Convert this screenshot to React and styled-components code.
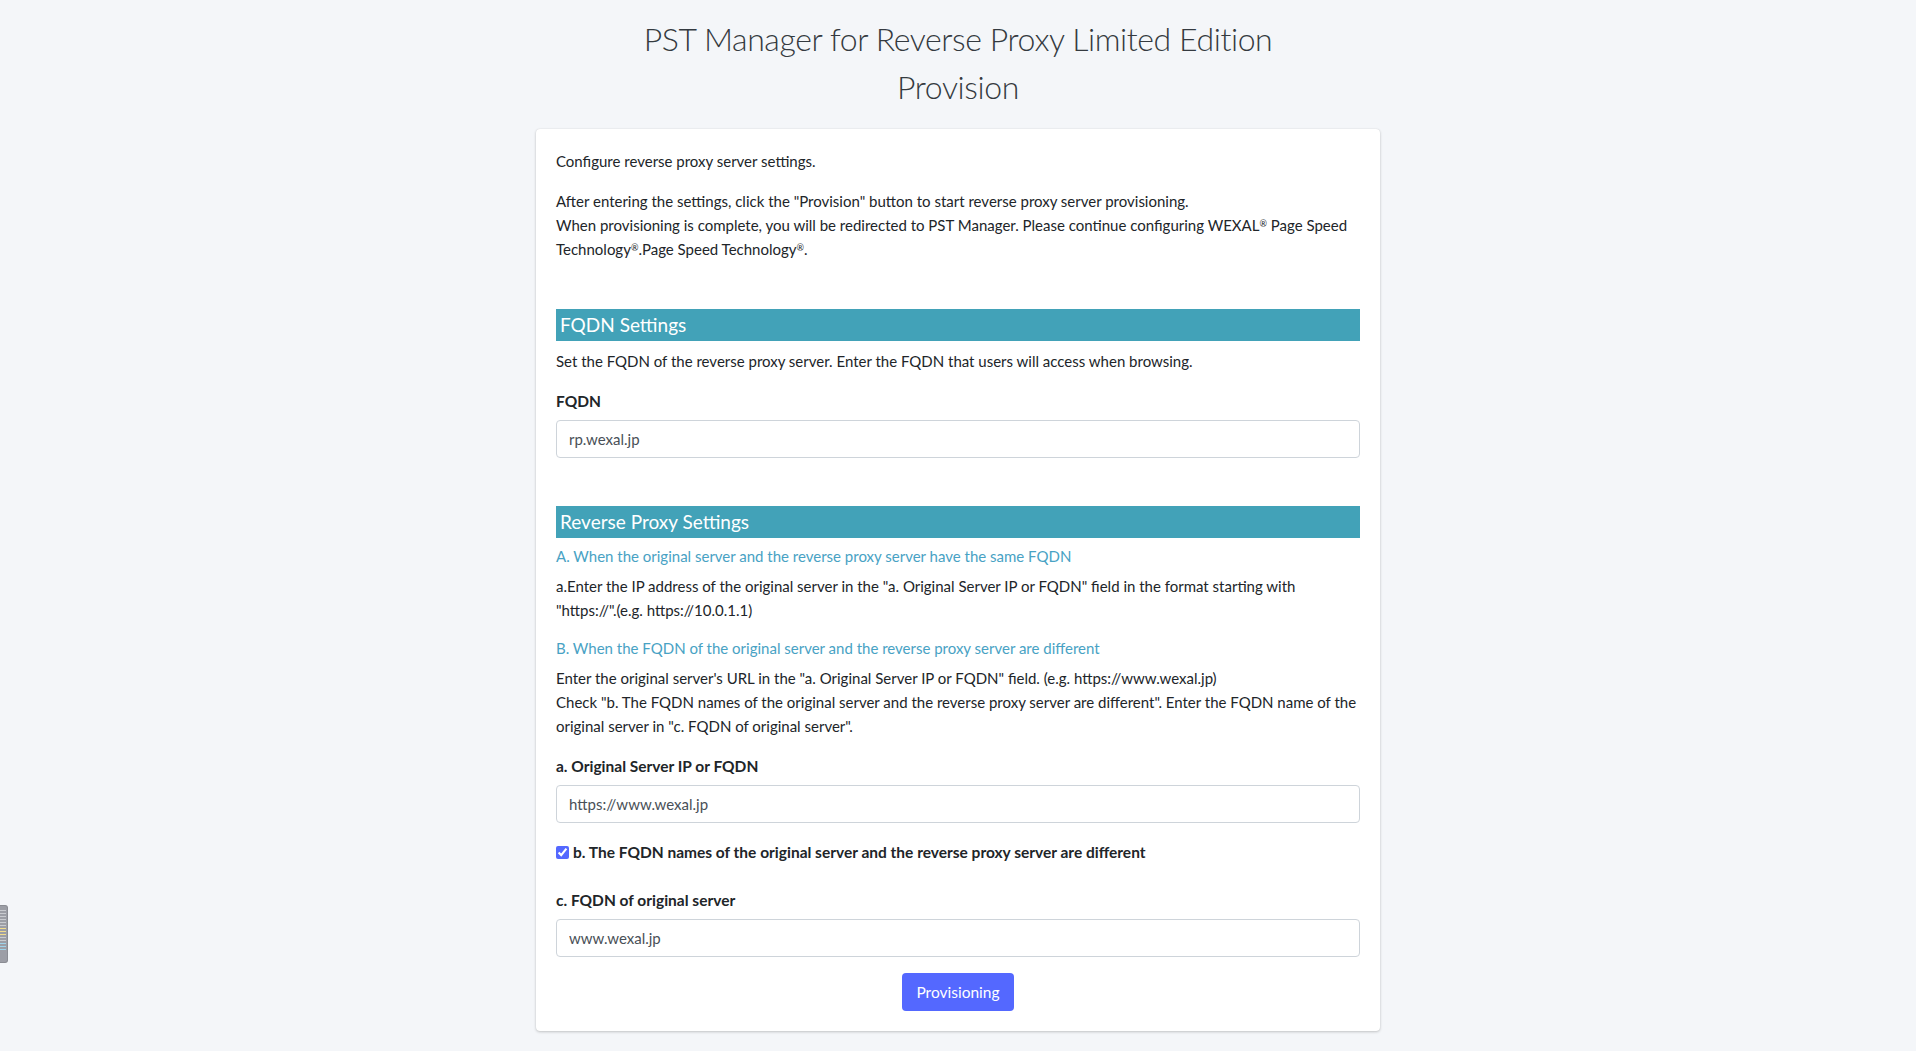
import React from "react";
import styled, { createGlobalStyle } from "styled-components";

const GlobalStyle = createGlobalStyle`
  html, body {
    margin: 0;
    padding: 0;
    background: #f4f6f9;
  }
  body {
    font-family: Lato, "Liberation Sans", sans-serif;
    color: #212529;
  }
  * {
    box-sizing: border-box;
  }
`;

const Page = styled.div`
  min-height: 1051px;
  padding-top: 15px;
  padding-bottom: 19px;
`;

const Title = styled.h1`
  margin: 0 0 18px;
  text-align: center;
  font-size: 32px;
  font-weight: 300;
  line-height: 48px;
  letter-spacing: -0.4px;
  color: #343a40;
`;

const Card = styled.div`
  width: 844px;
  margin: 0 auto;
  padding: 20px;
  background: #fff;
  border-radius: 4px;
  box-shadow: 0 0 1px rgba(0, 0, 0, 0.125), 0 1px 3px rgba(0, 0, 0, 0.2);
  font-size: 15px;
  line-height: 24px;
`;

const Text = styled.p`
  margin: 0 0 ${(p) => (p.$last ? 0 : 16)}px;
`;

const Reg = styled.sup`
  font-size: 0.6em;
  line-height: 0;
  vertical-align: 0.5em;
`;

const NoBreak = styled.span`
  white-space: nowrap;
`;

const Section = styled.section`
  margin-top: 48px;
`;

const SectionBar = styled.h4`
  margin: 0 0 8px;
  height: 32px;
  padding: 0 4px;
  background: #42a2b8;
  color: #fff;
  font-size: 19px;
  font-weight: 400;
  line-height: 32px;
`;

const SubHeading = styled.h5`
  margin: 0 0 8px;
  font-size: 15px;
  font-weight: 400;
  line-height: 20px;
  color: #48a2c4;
`;

const FormGroup = styled.div`
  margin-bottom: ${(p) => p.$mb ?? 16}px;
`;

const Label = styled.label`
  display: block;
  margin-bottom: 7px;
  font-size: 15.5px;
  font-weight: 700;
`;

const Input = styled.input`
  display: block;
  width: 100%;
  height: 38px;
  padding: 0 12px;
  border: 1px solid #ced4da;
  border-radius: 4px;
  background: #fff;
  color: #495057;
  font-family: inherit;
  font-size: 15px;
  outline: none;
`;

const CheckRow = styled.label`
  display: flex;
  align-items: center;
  gap: 4px;
  margin: 17px 0 24px;
  font-size: 15.5px;
  font-weight: 700;
  line-height: 24px;
`;

const Check = styled.input`
  width: 13px;
  height: 13px;
  margin: 0;
  accent-color: #5468ff;
`;

const Actions = styled.div`
  display: flex;
  justify-content: center;
  margin-top: 16px;
`;

const Button = styled.button`
  height: 38px;
  padding: 0 14px;
  border: none;
  border-radius: 4px;
  background: #5468ff;
  color: #fff;
  font-family: inherit;
  font-size: 15.5px;
  cursor: pointer;
`;

const SideTab = styled.div`
  position: fixed;
  left: 0;
  top: 905px;
  width: 8px;
  height: 58px;
  padding: 4px 1px 4px 0;
  display: flex;
  flex-direction: column;
  gap: 2px;
  background: #9c9ea6;
  border: 1px solid #8a8c93;
  border-left: none;
  border-radius: 0 3px 3px 0;
`;

const TabLine = styled.span`
  height: 1px;
  background: ${(p) => p.$color};
`;

const tabColors = [
  "#c9cbd0", "#c9cbd0", "#c9cbd0", "#c9cbd0", "#c9cbd0", "#c9cbd0",
  "#f2dc8c", "#f2dc8c", "#f2dc8c", "#c9cbd0", "#c9cbd0",
  "#9fd3ea", "#9fd3ea", "#9fd3ea",
];

export default function App() {
  return (
    <>
      <GlobalStyle />
      <Page>
        <Title>
          PST Manager for Reverse Proxy Limited Edition
          <br />
          Provision
        </Title>
        <Card>
          <Text>Configure reverse proxy server settings.</Text>
          <Text $last>
            After entering the settings, click the "Provision" button to start
            reverse proxy server provisioning.
            <br />
            When provisioning is complete, you will be redirected to PST
            Manager. Please continue configuring WEXAL<Reg>®</Reg> Page Speed
            Technology<Reg>®</Reg>.Page Speed Technology<Reg>®</Reg>.
          </Text>

          <Section>
            <SectionBar>FQDN Settings</SectionBar>
            <Text>
              Set the FQDN of the reverse proxy server. Enter the FQDN that
              users will access when browsing.
            </Text>
            <FormGroup $mb={0}>
              <Label htmlFor="fqdn">FQDN</Label>
              <Input id="fqdn" defaultValue="rp.wexal.jp" />
            </FormGroup>
          </Section>

          <Section>
            <SectionBar>Reverse Proxy Settings</SectionBar>
            <SubHeading>
              A. When the original server and the reverse proxy server have the
              same FQDN
            </SubHeading>
            <Text>
              a.Enter the IP address of the original server in the "a. Original
              Server IP or FQDN" field in the format starting with{" "}
              <NoBreak>"https://".(e.g.</NoBreak> https://10.0.1.1)
            </Text>
            <SubHeading>
              B. When the FQDN of the original server and the reverse proxy
              server are different
            </SubHeading>
            <Text>
              Enter the original server's URL in the "a. Original Server IP or
              FQDN" field. (e.g. https://www.wexal.jp)
              <br />
              Check "b. The FQDN names of the original server and the reverse
              proxy server are different". Enter the FQDN name of the original
              server in "c. FQDN of original server".
            </Text>
            <FormGroup $mb={0}>
              <Label htmlFor="origin">a. Original Server IP or FQDN</Label>
              <Input id="origin" defaultValue="https://www.wexal.jp" />
            </FormGroup>
            <CheckRow>
              <Check type="checkbox" defaultChecked />
              b. The FQDN names of the original server and the reverse proxy
              server are different
            </CheckRow>
            <FormGroup $mb={0}>
              <Label htmlFor="origin-fqdn">c. FQDN of original server</Label>
              <Input id="origin-fqdn" defaultValue="www.wexal.jp" />
            </FormGroup>
          </Section>

          <Actions>
            <Button type="button">Provisioning</Button>
          </Actions>
        </Card>
      </Page>
      <SideTab>
        {tabColors.map((c, i) => (
          <TabLine key={i} $color={c} />
        ))}
      </SideTab>
    </>
  );
}
